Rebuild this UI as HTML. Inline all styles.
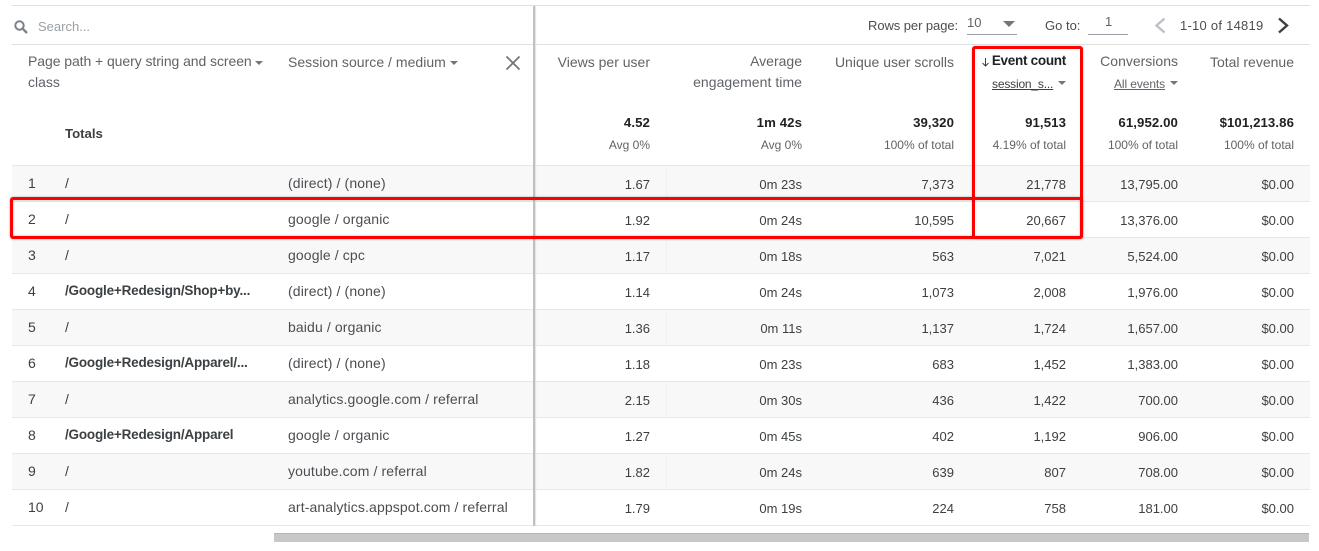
<!DOCTYPE html>
<html lang="en"><head><meta charset="utf-8"><title>Report</title>
<style>
html,body{margin:0;padding:0;background:#fff}
body{width:1319px;height:551px;position:relative;overflow:hidden;font-family:"Liberation Sans",sans-serif;font-size:14px;color:#3c4043}
.a{position:absolute;white-space:nowrap;line-height:20px}
.ln{position:absolute;left:12px;width:1298px;height:1px;background:#e0e0e0}
.h{color:#5f6368;letter-spacing:0}
.tt{font-weight:bold;font-size:13.2px;color:#202124;top:113px;letter-spacing:.1px}
.ts{font-size:12px;color:#5f6368;top:135px;letter-spacing:0}
.row{position:absolute;left:12px;width:1298px;height:35px;border-bottom:1px solid #e8e8e8;background:#fff}
.row.o{background:#f8f8f8}
.row.o:after{content:"";position:absolute;left:654px;top:0;width:1px;height:35px;background:#f0f0f0}
.row span{position:absolute;white-space:nowrap;line-height:20px;top:9px;font-size:13px;color:#3c4043}
.row .i{left:16px;top:7px;font-size:14px}
.row .p{left:53px;top:7px;font-size:14px;letter-spacing:-.25px}
.row .p.b{font-weight:bold;color:#3c4043;font-size:13.5px;letter-spacing:-.19px}
.row .s{left:276px;top:7px;font-size:14px;letter-spacing:.12px;color:#4a4e52}
.c1{right:660px}.c2{right:508px}.c3{right:356px}.c4{right:244px}.c5{right:132px}.c6{right:16px}
.tri{position:absolute;width:0;height:0;border-left:4px solid transparent;border-right:4px solid transparent;border-top:4px solid #757575}
.red{position:absolute;border:3px solid #f00;border-radius:3px;box-sizing:border-box;z-index:5}
</style></head><body>
<div class="ln" style="top:5px"></div>
<div class="ln" style="top:44px"></div>
<svg class="a" style="left:13px;top:19px" width="16" height="16" viewBox="0 0 16 16"><circle cx="6.5" cy="6.5" r="4.2" fill="none" stroke="#7b8288" stroke-width="2"/><path d="M9.7 9.7L14 14" stroke="#7b8288" stroke-width="2.4"/></svg>
<div class="a" style="left:38px;top:17px;font-size:13px;color:#9aa0a6">Search...</div>
<div class="a" style="left:868px;top:16px;font-size:13px;color:#4a4e52;letter-spacing:-.07px">Rows per page:</div>
<div class="a" style="left:967px;top:13px;font-size:13px;color:#5f6368">10</div>
<div class="a" style="left:967px;top:34px;width:50px;height:1px;background:#9aa0a6"></div>
<div class="tri" style="left:1003px;top:21px;border-left-width:6.5px;border-right-width:6.5px;border-top-width:6px"></div>
<div class="a" style="left:1045px;top:16px;font-size:13px;color:#4a4e52">Go to:</div>
<div class="a" style="left:1105px;top:12px;font-size:13px;color:#5f6368">1</div>
<div class="a" style="left:1088px;top:34px;width:40px;height:1px;background:#9aa0a6"></div>
<svg class="a" style="left:1153px;top:16px" width="16" height="20" viewBox="0 0 16 20"><path d="M11.500 2.500L3.500 9.500L11.500 16.500" fill="none" stroke="#bdc1c6" stroke-width="2.400"/></svg>
<div class="a" style="left:1180px;top:16px;font-size:13px;color:#4a4e52;letter-spacing:.25px">1-10 of 14819</div>
<svg class="a" style="left:1275px;top:16px" width="16" height="20" viewBox="0 0 16 20"><path d="M4 2.500L12 9.500L4 16.500" fill="none" stroke="#3c4043" stroke-width="2.400"/></svg>

<div class="a h" style="left:28px;top:51px;letter-spacing:-.07px">Page path + query string and screen</div>
<div class="tri" style="left:255px;top:61px"></div>
<div class="a h" style="left:28px;top:72px">class</div>
<div class="a h" style="left:288px;top:52px;letter-spacing:.03px">Session source / medium</div>
<div class="tri" style="left:450px;top:61px"></div>
<svg class="a" style="left:505px;top:55px" width="16" height="16" viewBox="0 0 16 16"><path d="M1.500 1.500L14.500 14.500M14.500 1.500L1.500 14.500" stroke="#757575" stroke-width="1.800"/></svg>
<div class="a h" style="right:669px;top:52px">Views per user</div>
<div class="a h" style="right:517px;top:51px">Average</div>
<div class="a h" style="right:517px;top:72px;letter-spacing:.05px">engagement time</div>
<div class="a h" style="right:365px;top:52px">Unique user scrolls</div>
<svg class="a" style="left:981px;top:57px" width="9" height="10" viewBox="0 0 9 10"><path d="M4.500 1V9M1.500 6L4.500 9L7.500 6" fill="none" stroke="#3c4043" stroke-width="1"/></svg>
<div class="a" style="right:253px;top:51px;font-weight:bold;font-size:13.5px;color:#202124;letter-spacing:-.28px">Event count</div>
<div class="a" style="left:992px;top:74px;font-size:12px;color:#3c4043;text-decoration:underline;letter-spacing:-.18px">session_s...</div>
<div class="tri" style="left:1058px;top:81px"></div>
<div class="a h" style="right:141px;top:51px">Conversions</div>
<div class="a" style="left:1114px;top:74px;font-size:12px;color:#5f6368;text-decoration:underline;letter-spacing:-.1px">All events</div>
<div class="tri" style="left:1170px;top:81px"></div>
<div class="a h" style="right:25px;top:52px">Total revenue</div>

<div class="a" style="left:65px;top:124px;font-weight:bold;font-size:13.200px;color:#3c4043">Totals</div>
<div class="a tt" style="right:669px">4.52</div><div class="a ts" style="right:669px">Avg 0%</div>
<div class="a tt" style="right:517px">1m 42s</div><div class="a ts" style="right:517px">Avg 0%</div>
<div class="a tt" style="right:365px">39,320</div><div class="a ts" style="right:365px">100% of total</div>
<div class="a tt" style="right:253px">91,513</div><div class="a ts" style="right:253px">4.19% of total</div>
<div class="a tt" style="right:141px">61,952.00</div><div class="a ts" style="right:141px">100% of total</div>
<div class="a tt" style="right:25px">$101,213.86</div><div class="a ts" style="right:25px">100% of total</div>
<div class="ln" style="top:165px;background:#e8e8e8"></div>

<div class="row o" style="top:166px"><span class="i">1</span><span class="p">/</span><span class="s">(direct) / (none)</span><span class="c1">1.67</span><span class="c2">0m 23s</span><span class="c3">7,373</span><span class="c4">21,778</span><span class="c5">13,795.00</span><span class="c6">$0.00</span></div>
<div class="row" style="top:202px"><span class="i">2</span><span class="p">/</span><span class="s">google / organic</span><span class="c1">1.92</span><span class="c2">0m 24s</span><span class="c3">10,595</span><span class="c4">20,667</span><span class="c5">13,376.00</span><span class="c6">$0.00</span></div>
<div class="row o" style="top:238px"><span class="i">3</span><span class="p">/</span><span class="s">google / cpc</span><span class="c1">1.17</span><span class="c2">0m 18s</span><span class="c3">563</span><span class="c4">7,021</span><span class="c5">5,524.00</span><span class="c6">$0.00</span></div>
<div class="row" style="top:274px"><span class="i">4</span><span class="p b">/Google+Redesign/Shop+by...</span><span class="s">(direct) / (none)</span><span class="c1">1.14</span><span class="c2">0m 24s</span><span class="c3">1,073</span><span class="c4">2,008</span><span class="c5">1,976.00</span><span class="c6">$0.00</span></div>
<div class="row o" style="top:310px"><span class="i">5</span><span class="p">/</span><span class="s">baidu / organic</span><span class="c1">1.36</span><span class="c2">0m 11s</span><span class="c3">1,137</span><span class="c4">1,724</span><span class="c5">1,657.00</span><span class="c6">$0.00</span></div>
<div class="row" style="top:346px"><span class="i">6</span><span class="p b">/Google+Redesign/Apparel/...</span><span class="s">(direct) / (none)</span><span class="c1">1.18</span><span class="c2">0m 23s</span><span class="c3">683</span><span class="c4">1,452</span><span class="c5">1,383.00</span><span class="c6">$0.00</span></div>
<div class="row o" style="top:382px"><span class="i">7</span><span class="p">/</span><span class="s">analytics.google.com / referral</span><span class="c1">2.15</span><span class="c2">0m 30s</span><span class="c3">436</span><span class="c4">1,422</span><span class="c5">700.00</span><span class="c6">$0.00</span></div>
<div class="row" style="top:418px"><span class="i">8</span><span class="p b">/Google+Redesign/Apparel</span><span class="s">google / organic</span><span class="c1">1.27</span><span class="c2">0m 45s</span><span class="c3">402</span><span class="c4">1,192</span><span class="c5">906.00</span><span class="c6">$0.00</span></div>
<div class="row o" style="top:454px"><span class="i">9</span><span class="p">/</span><span class="s">youtube.com / referral</span><span class="c1">1.82</span><span class="c2">0m 24s</span><span class="c3">639</span><span class="c4">807</span><span class="c5">708.00</span><span class="c6">$0.00</span></div>
<div class="row" style="top:490px"><span class="i">10</span><span class="p">/</span><span class="s">art-analytics.appspot.com / referral</span><span class="c1">1.79</span><span class="c2">0m 19s</span><span class="c3">224</span><span class="c4">758</span><span class="c5">181.00</span><span class="c6">$0.00</span></div>

<div class="a" style="left:533px;top:6px;width:2px;height:520px;background:#c0c0c0;box-shadow:1px 0 1px #e2e2e2"></div>
<div class="a" style="left:274px;top:533px;width:1035px;height:9px;background:#c8c8c8;border-top:1px solid #b5b5b5;box-sizing:border-box"></div>
<div class="red" style="left:972px;top:46px;width:111px;height:193px;box-shadow:0 0 2px rgba(0,0,0,.2)"></div>
<div class="red" style="left:10px;top:197px;width:1073px;height:42px;box-shadow:0 0 2px rgba(0,0,0,.3),inset 0 0 2px rgba(0,0,0,.3)"></div>
</body></html>
